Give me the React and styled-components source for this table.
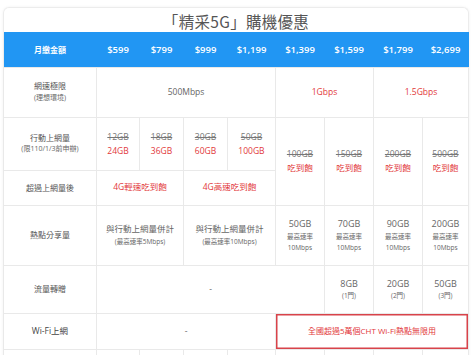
import React from 'react';
import styled, {createGlobalStyle} from 'styled-components';

const Global = createGlobalStyle`
	html, body {
		margin: 0;
		padding: 0;
		background: #fff;
		overflow: hidden;
	}
	body {
		font-family: "Open Sans", "Noto Sans CJK TC", sans-serif;
	}`;

const Page = styled.div`
	width: 474px;
	height: 355px;
	padding: 7px 0 0 3px;
	box-sizing: border-box;`;

const Card = styled.div`
	width: 466px;
	border: 1px solid #ececec;
	border-bottom: none;
	border-radius: 6px 6px 0 0;
	box-shadow: 0 0 3px rgba(0, 0, 0, 0.06);
	box-sizing: border-box;`;

const Title = styled.h1`
	margin: 0;
	height: 24px;
	line-height: 27px;
	text-align: center;
	font-size: 15.5px;
	font-weight: 400;
	color: #555;
	font-family: "Noto Sans CJK TC", sans-serif;
	letter-spacing: 0.3px;`;

const Table = styled.table`
	width: 465px;
	margin-left: -1px;
	border-collapse: collapse;
	table-layout: fixed;`;

const HeadRow = styled.tr`
	height: 35px;
	background: #2196f3;`;

const Th = styled.th`
	color: #fff;
	font-size: 9.5px;
	font-weight: 600;
	text-align: center;
	padding: 0;
	font-family: "Open Sans", "Noto Sans CJK TC", sans-serif;`;

const Row = styled.tr`
	height: ${p => p.$h}px;`;

const Cell = styled.td`
	border: 1px solid #e9e9e9;
	padding: 0;
	text-align: center;
	vertical-align: middle;
	font-size: 8.5px;
	line-height: 1.45;
	color: ${p => (p.$red ? '#e2383b' : '#666')};
	font-family: "Open Sans", "Noto Sans CJK TC", sans-serif;`;

const Label = styled(Cell)`
	color: #555;
	font-size: 8px;`;

const Sub = styled.div`
	font-size: ${p => p.$size || 7}px;
	line-height: 1.7;
	color: ${p => p.$color || '#666'};`;

const Old = styled.div`
	text-decoration: line-through;
	color: #777;
	line-height: 1.6;`;

const Red = styled.div`
	color: #e2383b;
	line-height: 1.6;`;

const Big = styled.div`
	font-size: 9px;
	color: #666;
	line-height: 1.5;`;

const WifiCell = styled(Cell)`
	box-shadow: inset 0 0 0 1.5px #d8434a;
	border-left: 1px solid #e9e9e9;
	color: #e2383b;
	font-size: 8px;`;

const Split = styled.div`
	display: flex;
	height: 100%;
	& > div {
		flex: 1;
	}
	& > div + div {
		border-left: 1px solid #e9e9e9;
	}`;

const widths = [93, 43, 44, 44, 48, 49, 49, 49, 46];
const prices = ['$599', '$799', '$999', '$1,199', '$1,399', '$1,599', '$1,799', '$2,699'];

const App = () => {
	return (
		<Page>
			<Global/>
			<Card>
				<Title>「精采5G」購機優惠</Title>
				<Table>
					<colgroup>
						{widths.map((w, i) => <col key={i} style={{width: w}}/>)}
					</colgroup>
					<tbody>
						<HeadRow>
							<Th style={{fontFamily: '"Noto Sans CJK TC", sans-serif', fontSize: 8}}>月繳金額</Th>
							{prices.map(p => <Th key={p}>{p}</Th>)}
						</HeadRow>
						<Row $h={50}>
							<Label>
								網速極限
								<Sub>(理想環境)</Sub>
							</Label>
							<Cell colSpan={4}>500Mbps</Cell>
							<Cell colSpan={2} $red>1Gbps</Cell>
							<Cell colSpan={2} $red>1.5Gbps</Cell>
						</Row>
						<Row $h={53}>
							<Label>
								行動上網量
								<Sub>(限110/1/3前申辦)</Sub>
							</Label>
							{[['12GB', '24GB'], ['18GB', '36GB'], ['30GB', '60GB'], ['50GB', '100GB']].map(([o, n]) => (
								<Cell key={o}>
									<Old>{o}</Old>
									<Red>{n}</Red>
								</Cell>
							))}
							{['100GB', '150GB', '200GB', '500GB'].map(o => (
								<Cell key={o} rowSpan={2}>
									<Old>{o}</Old>
									<Red>吃到飽</Red>
								</Cell>
							))}
						</Row>
						<Row $h={35}>
							<Label>超過上網量後</Label>
							<Cell colSpan={2} $red>4G輕速吃到飽</Cell>
							<Cell colSpan={2} $red>4G高速吃到飽</Cell>
						</Row>
						<Row $h={60}>
							<Label>熱點分享量</Label>
							<Cell colSpan={2}>
								與行動上網量併計
								<Sub $size={6.5}>(最高速率5Mbps)</Sub>
							</Cell>
							<Cell colSpan={2}>
								與行動上網量併計
								<Sub $size={6.5}>(最高速率10Mbps)</Sub>
							</Cell>
							{['50GB', '70GB', '90GB', '200GB'].map(g => (
								<Cell key={g}>
									<Big>{g}</Big>
									<Sub $size={6.5}>最高速率</Sub>
									<Sub $size={6.5}>10Mbps</Sub>
								</Cell>
							))}
						</Row>
						<Row $h={48}>
							<Label>流量轉贈</Label>
							<Cell colSpan={5}>-</Cell>
							{[['8GB', '(1門)'], ['20GB', '(2門)'], ['50GB', '(3門)']].map(([g, n]) => (
								<Cell key={g}>
									<Big>{g}</Big>
									<Sub $size={6.5}>{n}</Sub>
								</Cell>
							))}
						</Row>
						<Row $h={36}>
							<Label style={{fontSize: 8.5, color: '#444'}}>Wi-Fi上網</Label>
							<Cell colSpan={4}>-</Cell>
							<WifiCell colSpan={4}>全國超過5萬個CHT Wi-Fi熱點無限用</WifiCell>
						</Row>
						<Row $h={12}>
							<Cell>
								<Split>
									<div/>
									<div/>
								</Split>
							</Cell>
							{prices.map(p => <Cell key={p}/>)}
						</Row>
					</tbody>
				</Table>
			</Card>
		</Page>
	);
};

export default App;
